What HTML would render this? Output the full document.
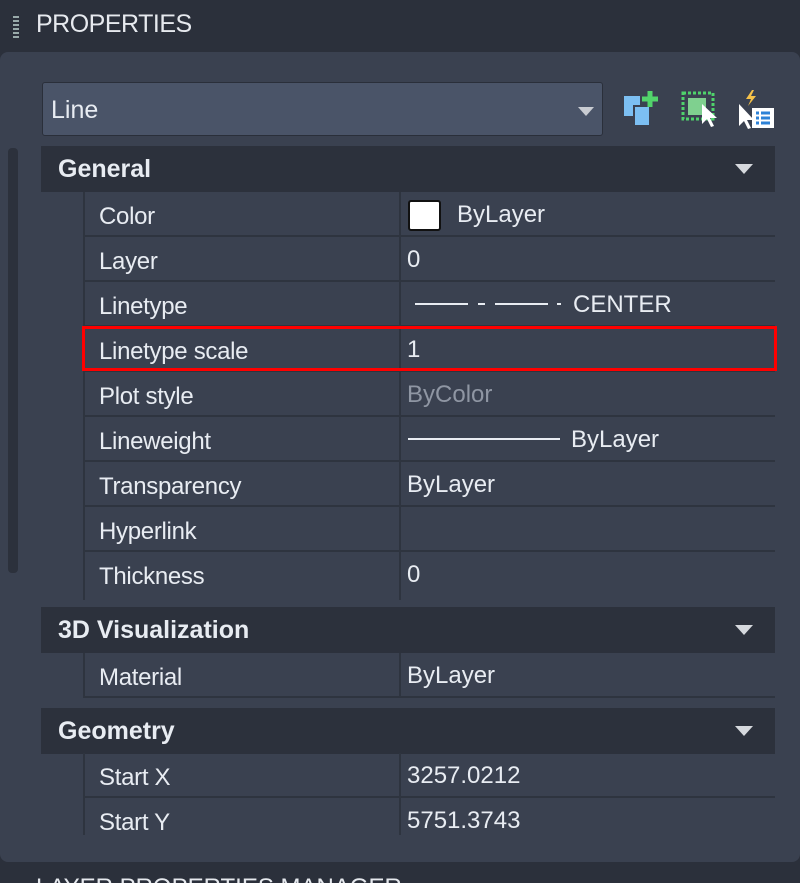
<!DOCTYPE html>
<html style="width:800px;height:883px;overflow:hidden"><head><meta charset="utf-8"><style>
*{margin:0;padding:0;box-sizing:border-box}
body{width:800px;height:883px;background:#2b303b;font-family:"Liberation Sans",sans-serif;color:#e8ecf2;position:relative;overflow:hidden}
.abs{position:absolute}
.title{left:36px;top:10px;font-size:25px;letter-spacing:-0.5px;color:#e6e9ee}
.panel{left:0;top:52px;width:800px;height:810px;background:#3a4150;border-radius:8px}
.combo{left:42px;top:82px;width:561px;height:54px;background:#4a5468;border:1px solid #2a2f3a;border-radius:3px;font-size:25px;padding:13px 0 0 8px}
.hdr{left:41px;width:734px;height:46px;background:#2c313c;font-size:25px;font-weight:bold;padding:9px 0 0 17px}
.tri{position:absolute;right:22px;top:18px;width:0;height:0;border-left:9px solid transparent;border-right:9px solid transparent;border-top:10px solid #d6d9de}
.row{left:83px;width:692px;height:45px;border-bottom:2px solid #2e343f;border-left:2px solid #2e343f;font-size:24px}
.row .l{position:absolute;left:14px;top:11px;letter-spacing:-0.3px}
.row .v{position:absolute;left:322px;top:9px}
.row .d{position:absolute;left:314px;top:0;width:2px;height:45px;background:#2e343f}
</style></head><body>
<div class="abs" style="left:13px;top:16px;width:6px;height:24px;background:repeating-linear-gradient(#9aa 0 2px,transparent 2px 4px)"></div>
<div class="abs title">PROPERTIES</div>
<div class="abs panel"></div>
<div class="abs" style="left:8px;top:148px;width:10px;height:425px;background:#2c313c;border-radius:4px"></div>
<div class="abs combo">Line<div style="position:absolute;right:8px;top:24px;border-left:8px solid transparent;border-right:8px solid transparent;border-top:9px solid #c9ccd2"></div></div>
<svg class="abs" style="left:620px;top:88px" width="160" height="44">
<rect x="4" y="8" width="16" height="20" fill="#7cbff2"/><rect x="14" y="18" width="16" height="20" fill="#7cbff2" stroke="#3a4150" stroke-width="2"/>
<path d="M30 3v16M22 11h16" stroke="#52d36b" stroke-width="5"/>
<rect x="63" y="5" width="30" height="26" fill="none" stroke="#4fd36b" stroke-width="3" stroke-dasharray="3 2"/><rect x="68" y="10" width="18" height="17" fill="#7fd08f"/>
<path d="M82 16l0 20 5-5 4 8 3-1-4-8 7 0z" fill="#fff"/>
<path d="M119 16l0 22 5-5 4 8 3-1-4-8 7 0z" fill="#fff"/>
<path d="M132 2l-6 9h5l-3 7 8-10h-5l3-6z" fill="#f6c24a"/>
<rect x="132" y="20" width="22" height="20" fill="#fff"/><path d="M136 25h3M141 25h9M136 30h3M141 30h9M136 35h3M141 35h9" stroke="#2d82d7" stroke-width="3"/>
</svg>
<div class="abs hdr" style="top:146px">General<div class="tri"></div></div>
<div class="abs row" style="top:192px"><span class="l">Color</span><div class="d"></div><span class="v" style="left:323px;top:8px;width:33px;height:31px;background:#fff;border:2px solid #111;border-radius:3px"></span><span class="v" style="left:372px">ByLayer</span></div>
<div class="abs row" style="top:237px"><span class="l">Layer</span><div class="d"></div><span class="v">0</span></div>
<div class="abs row" style="top:282px"><span class="l">Linetype</span><div class="d"></div><span class="v" style="left:330px;top:21px;width:53px;height:2px;background:#e8ecf2"></span><span class="v" style="left:393px;top:21px;width:7px;height:2px;background:#e8ecf2"></span><span class="v" style="left:410px;top:21px;width:53px;height:2px;background:#e8ecf2"></span><span class="v" style="left:472px;top:21px;width:4px;height:2px;background:#e8ecf2"></span><span class="v" style="left:488px">CENTER</span></div>
<div class="abs row" style="top:327px"><span class="l">Linetype scale</span><div class="d"></div><span class="v">1</span></div>
<div class="abs row" style="top:372px"><span class="l">Plot style</span><div class="d"></div><span class="v" style="color:#8f96a3">ByColor</span></div>
<div class="abs row" style="top:417px"><span class="l">Lineweight</span><div class="d"></div><span class="v" style="left:323px;top:21px;width:152px;height:2px;background:#e8ecf2"></span><span class="v" style="left:486px">ByLayer</span></div>
<div class="abs row" style="top:462px"><span class="l">Transparency</span><div class="d"></div><span class="v">ByLayer</span></div>
<div class="abs row" style="top:507px"><span class="l">Hyperlink</span><div class="d"></div></div>
<div class="abs row" style="top:552px;height:48px;border-bottom:none"><span class="l">Thickness</span><div class="d" style="height:48px"></div><span class="v">0</span></div>
<div class="abs" style="left:82px;top:326px;width:695px;height:45px;border:3px solid #ff0000"></div>
<div class="abs hdr" style="top:607px">3D Visualization<div class="tri"></div></div>
<div class="abs row" style="top:653px"><span class="l">Material</span><div class="d"></div><span class="v">ByLayer</span></div>
<div class="abs hdr" style="top:708px">Geometry<div class="tri"></div></div>
<div class="abs row" style="top:753px"><span class="l">Start X</span><div class="d"></div><span class="v">3257.0212</span></div>
<div class="abs row" style="top:798px;height:37px;border-bottom:none"><span class="l">Start Y</span><div class="d" style="height:37px"></div><span class="v">5751.3743</span></div>
<div class="abs" style="left:0;top:866px;width:800px;height:17px;background:#2b303b"></div>
<div class="abs" style="left:36px;top:874px;font-size:24px;color:#e6e9ee">LAYER PROPERTIES MANAGER</div>
</body></html>
